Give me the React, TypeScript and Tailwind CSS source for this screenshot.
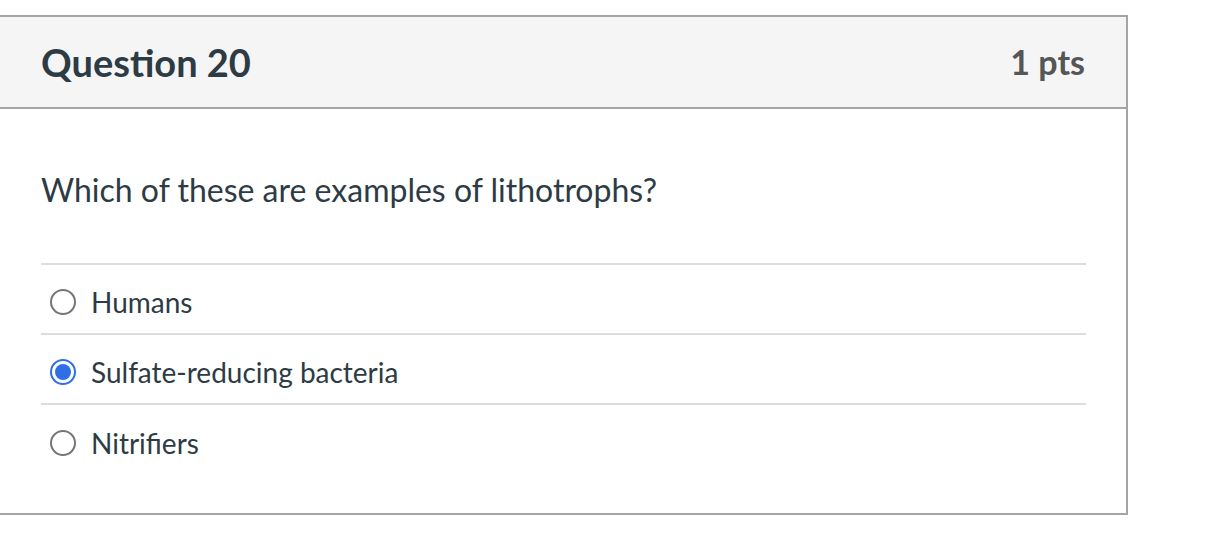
import { useState } from "react";

const answers = ["Humans", "Sulfate-reducing bacteria", "Nitrifiers"];

function Radio({ checked }: { checked: boolean }) {
  if (checked) {
    return (
      <span className="flex h-[26px] w-[26px] shrink-0 items-center justify-center rounded-full border-2 border-[#2f6fe6] bg-white">
        <span className="h-[16px] w-[16px] rounded-full bg-[#2f6fe6]" />
      </span>
    );
  }
  return (
    <span className="h-[26px] w-[26px] shrink-0 rounded-full border-2 border-[#767676] bg-white" />
  );
}

export default function App() {
  const [selected, setSelected] = useState(1);

  return (
    <div
      className="min-h-screen bg-white pt-[15px] text-[#2d3b45]"
      style={{ fontFamily: "Lato, 'Open Sans', sans-serif" }}
    >
      <div className="w-[1128px] border-y-2 border-r-2 border-[#a5a5a5]">
        {/* header */}
        <div className="flex h-[92px] items-center justify-between border-b-2 border-[#a5a5a5] bg-[#f5f5f5] pl-[41px] pr-[41px]">
          <h2 className="text-[38px] font-bold leading-none">Question 20</h2>
          <span className="text-[34px] font-bold leading-none text-[#565656]">
            1 pts
          </span>
        </div>

        {/* body */}
        <div className="pb-[38px] pl-[41px] pr-[40px]">
          <p className="pb-[54px] pt-[62px] text-[32px] leading-[38px]">
            Which of these are examples of lithotrophs?
          </p>
          <div className="border-t-2 border-[#dddddd]">
            {answers.map((a, i) => (
              <label
                key={a}
                onClick={() => setSelected(i)}
                className={
                  "flex h-[70px] cursor-pointer items-center gap-[15px] pl-[9px] pt-[5px] " +
                  (i < answers.length - 1 ? "border-b-2 border-[#dddddd]" : "")
                }
              >
                <Radio checked={selected === i} />
                <span className="text-[28px] leading-none">{a}</span>
              </label>
            ))}
          </div>
        </div>
      </div>
    </div>
  );
}
